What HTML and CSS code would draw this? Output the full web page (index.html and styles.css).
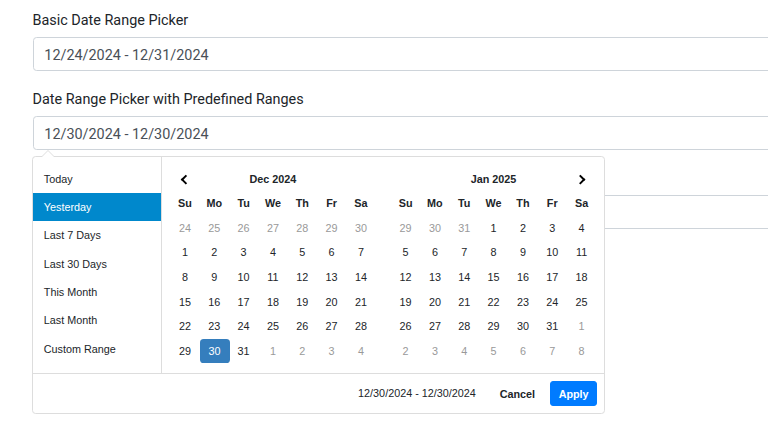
FILE: index.html
```html
<!DOCTYPE html>
<html>
<head>
<meta charset="utf-8">
<link rel="stylesheet" href="styles.css">
</head>
<body>
<div class="page">
  <div class="form-group">
    <label class="lbl">Basic Date Range Picker</label>
    <div class="input">12/24/2024 - 12/31/2024</div>
  </div>
  <div class="form-group">
    <label class="lbl">Date Range Picker with Predefined Ranges</label>
    <div class="input">12/30/2024 - 12/30/2024</div>
  </div>
  <div class="form-group">
    <div class="lbl lbl-empty"></div>
    <div class="input"></div>
  </div>

  <div class="drp">
    <div class="drp-main">
      <ul class="ranges">
        <li>Today</li>
        <li class="active">Yesterday</li>
        <li>Last 7 Days</li>
        <li>Last 30 Days</li>
        <li>This Month</li>
        <li>Last Month</li>
        <li>Custom Range</li>
      </ul>
      <div class="cal cal-left">
        <table>
          <colgroup><col><col><col><col><col><col><col></colgroup>
          <tr><th class="nav"><span class="chev prev"></span></th><th colspan="5" class="month">Dec 2024</th><th></th></tr>
          <tr class="dow"><th>Su</th><th>Mo</th><th>Tu</th><th>We</th><th>Th</th><th>Fr</th><th>Sa</th></tr>
          <tr><td class="off">24</td><td class="off">25</td><td class="off">26</td><td class="off">27</td><td class="off">28</td><td class="off">29</td><td class="off">30</td></tr>
          <tr><td>1</td><td>2</td><td>3</td><td>4</td><td>5</td><td>6</td><td>7</td></tr>
          <tr><td>8</td><td>9</td><td>10</td><td>11</td><td>12</td><td>13</td><td>14</td></tr>
          <tr><td>15</td><td>16</td><td>17</td><td>18</td><td>19</td><td>20</td><td>21</td></tr>
          <tr><td>22</td><td>23</td><td>24</td><td>25</td><td>26</td><td>27</td><td>28</td></tr>
          <tr><td>29</td><td class="sel"><span>30</span></td><td>31</td><td class="off">1</td><td class="off">2</td><td class="off">3</td><td class="off">4</td></tr>
        </table>
      </div>
      <div class="cal cal-right">
        <table>
          <colgroup><col><col><col><col><col><col><col></colgroup>
          <tr><th></th><th colspan="5" class="month">Jan 2025</th><th class="nav"><span class="chev next"></span></th></tr>
          <tr class="dow"><th>Su</th><th>Mo</th><th>Tu</th><th>We</th><th>Th</th><th>Fr</th><th>Sa</th></tr>
          <tr><td class="off">29</td><td class="off">30</td><td class="off">31</td><td>1</td><td>2</td><td>3</td><td>4</td></tr>
          <tr><td>5</td><td>6</td><td>7</td><td>8</td><td>9</td><td>10</td><td>11</td></tr>
          <tr><td>12</td><td>13</td><td>14</td><td>15</td><td>16</td><td>17</td><td>18</td></tr>
          <tr><td>19</td><td>20</td><td>21</td><td>22</td><td>23</td><td>24</td><td>25</td></tr>
          <tr><td>26</td><td>27</td><td>28</td><td>29</td><td>30</td><td>31</td><td class="off">1</td></tr>
          <tr><td class="off">2</td><td class="off">3</td><td class="off">4</td><td class="off">5</td><td class="off">6</td><td class="off">7</td><td class="off">8</td></tr>
        </table>
      </div>
    </div>
    <div class="drp-buttons">
      <span class="drp-selected">12/30/2024 - 12/30/2024</span>
      <button class="btn btn-cancel">Cancel</button>
      <button class="btn btn-apply">Apply</button>
    </div>
  </div>
</div>
</body>
</html>
```
FILE: styles.css
```css
html {
  overflow: hidden;
}
body {
  margin: 0;
  padding: 0;
  background: #fff;
  font-family: "Segoe UI", Roboto, "Liberation Sans", sans-serif;
  font-size: 14.4px;
  line-height: 1.5;
  color: #212529;
}
.page {
  position: relative;
  width: 1000px;
  min-height: 435px;
  padding: 10px 0 0 32.5px;
}
.form-group {
  margin-bottom: 18px;
}
.lbl {
  display: block;
  margin-bottom: 5.4px;
  height: 21.6px;
  line-height: 21.6px;
}
.input {
  box-sizing: border-box;
  height: 34px;
  padding: 4px 10.8px 0;
  border: 1px solid #ced4da;
  border-radius: 3.6px;
  color: #495057;
  line-height: 28px;
}

/* date range picker */
.drp {
  position: absolute;
  left: 32px;
  top: 156px;
  width: 573px;
  box-sizing: border-box;
  background: #fff;
  border: 1px solid #ddd;
  border-radius: 3.6px;
  font-family: "Liberation Sans", Arial, sans-serif;
  font-size: 10.8px;
  line-height: 1;
  color: #212529;
}
.drp::before,
.drp::after {
  content: "";
  position: absolute;
  border-style: solid;
  border-color: transparent;
}
.drp::before {
  left: 8px;
  top: -7px;
  border-width: 0 7px 7px 7px;
  border-bottom-color: #ddd;
}
.drp::after {
  left: 9px;
  top: -6px;
  border-width: 0 6px 6px 6px;
  border-bottom-color: #fff;
}
.drp-main {
  display: flex;
  height: 216px;
}
.ranges {
  list-style: none;
  margin: 0;
  padding: 7.9px 0 0 0;
  width: 128px;
  flex: none;
  border-right: 1px solid #ddd;
}
.ranges li {
  padding: 0 10.8px;
  height: 28.3px;
  line-height: 28.3px;
  font-size: 10.8px;
}
.ranges li.active {
  background: #08c;
  color: #fff;
}
.cal {
  padding-top: 9.7px;
  flex: none;
}
.cal-left {
  padding-left: 8.3px;
}
.cal-right {
  padding-left: 15.3px;
  padding-right: 7.3px;
}
.cal table {
  border-collapse: collapse;
  border-spacing: 0;
  table-layout: fixed;
  width: 205.3px;
}
.cal col {
  width: 29.33px;
}
.cal th,
.cal td {
  height: 24.6px;
  padding: 0;
  text-align: center;
  font-size: 10.8px;
  white-space: nowrap;
}
.cal th {
  font-weight: bold;
}
.cal td.off {
  color: #999;
}
.cal td.sel span {
  display: block;
  margin: 0 auto;
  width: 30px;
  height: 24px;
  line-height: 24px;
  background: #357ebd;
  color: #fff;
  border-radius: 3.6px;
}
.chev {
  display: inline-block;
  border: solid #000;
  border-width: 0 2.6px 2.6px 0;
  padding: 2.6px;
  vertical-align: middle;
}
.chev.prev {
  transform: rotate(135deg);
  margin-left: 2px;
}
.chev.next {
  transform: rotate(-45deg);
  margin-right: 2px;
}
.drp-buttons {
  display: flex;
  align-items: center;
  justify-content: flex-end;
  border-top: 1px solid #ddd;
  padding: 7.2px;
  height: 40px;
  box-sizing: border-box;
}
.drp-selected {
  padding-right: 8.5px;
  font-size: 10.8px;
}
.btn {
  margin-left: 7.2px;
  font-family: "Liberation Sans", Arial, sans-serif;
  font-size: 10.8px;
  font-weight: bold;
  padding: 0 7.2px;
  height: 25px;
  border: 1px solid transparent;
  border-radius: 3px;
  background: transparent;
  color: #212529;
}
.btn-apply {
  background: #007bff;
  border-color: #007bff;
  color: #fff;
}
```
